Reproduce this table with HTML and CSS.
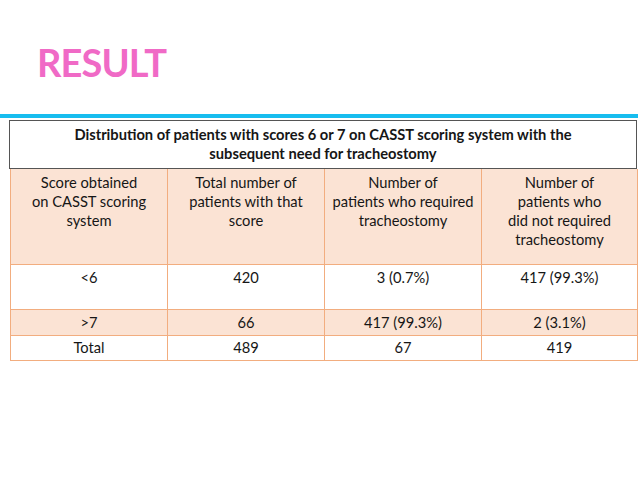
FILE: index.html
```html
<!DOCTYPE html>
<html>
<head>
<meta charset="utf-8">
<link rel="stylesheet" href="styles.css">
</head>
<body>
<div class="slide">
  <h1 class="title">RESULT</h1>
  <div class="rule"></div>
  <div class="table-wrap">
    <div class="caption">Distribution of patients with scores 6 or 7 on CASST scoring system with the<br>subsequent need for tracheostomy</div>
    <table class="data">
      <colgroup><col class="c1"><col class="c2"><col class="c3"><col class="c4"></colgroup>
      <tr class="head">
        <td>Score obtained<br>on CASST scoring<br>system</td>
        <td>Total number of<br>patients with that<br>score</td>
        <td>Number of<br>patients who required<br>tracheostomy</td>
        <td>Number of<br>patients who<br>did not required<br>tracheostomy</td>
      </tr>
      <tr class="tall">
        <td>&lt;6</td><td>420</td><td>3 (0.7%)</td><td>417 (99.3%)</td>
      </tr>
      <tr class="shade short">
        <td>&gt;7</td><td>66</td><td>417 (99.3%)</td><td>2 (3.1%)</td>
      </tr>
      <tr class="short last">
        <td>Total</td><td>489</td><td>67</td><td>419</td>
      </tr>
    </table>
  </div>
</div>
</body>
</html>
```
FILE: styles.css
```css
* { box-sizing: border-box; }
html, body { margin: 0; padding: 0; background: #fff; }
.slide {
  width: 638px;
  height: 478px;
  font-family: Lato, "Open Sans", sans-serif;
  color: #161616;
}
.title {
  margin: 0;
  padding: 42px 0 0 37px;
  height: 114px;
  font-size: 38px;
  line-height: 40px;
  font-weight: 700;
  color: #f06ac6;
  letter-spacing: -0.9px;
}
.rule {
  height: 4px;
  background: #17bdef;
}
.table-wrap {
  margin: 2px 0 0 9px;
  width: 628px;
}
.caption {
  height: 49px;
  border: 1.5px solid #555;
  font-weight: 700;
  font-size: 14.7px;
  line-height: 19px;
  text-align: center;
  padding-top: 4px;
}
.data {
  border-collapse: collapse;
  table-layout: fixed;
  width: 627px;
  margin-left: 1px;
  font-size: 14.7px;
  line-height: 19px;
  text-align: center;
}
.data td {
  border: 1px solid #f2ad7f;
  border-top: none;
  vertical-align: top;
  padding: 4px 0 0 0;
}
.c1, .c2, .c3 { width: 157px; }
.c4 { width: 156px; }
.head td { background: #fbe3d4; height: 95px; padding-top: 4px; }
.tall td { height: 45px; padding-top: 3px; }
.shade td { background: #fbe3d4; }
.short td { height: 26px; padding-top: 3px; }
.last td { height: 25px; padding-top: 2px; }
```
